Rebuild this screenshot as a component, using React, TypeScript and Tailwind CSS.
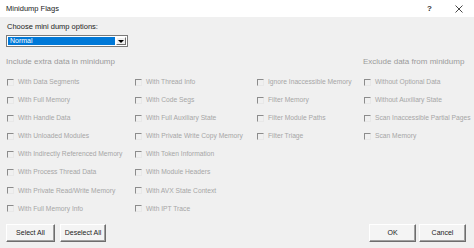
const includeCols: string[][] = [
  [
    'With Data Segments',
    'With Full Memory',
    'With Handle Data',
    'With Unloaded Modules',
    'With Indirectly Referenced Memory',
    'With Process Thread Data',
    'With Private Read/Write Memory',
    'With Full Memory Info',
  ],
  [
    'With Thread Info',
    'With Code Segs',
    'With Full Auxiliary State',
    'With Private Write Copy Memory',
    'With Token Information',
    'With Module Headers',
    'With AVX State Context',
    'With IPT Trace',
  ],
  ['Ignore Inaccessible Memory', 'Filter Memory', 'Filter Module Paths', 'Filter Triage'],
]

const excludeCol = ['Without Optional Data', 'Without Auxiliary State', 'Scan Inaccessible Partial Pages', 'Scan Memory']

function Check({ label }: { label: string }) {
  return (
    <div className="flex items-center h-[18.1px] whitespace-nowrap">
      <span className="w-[7px] h-[7px] border-t border-l border-t-[#8c8c8c] border-l-[#8c8c8c] border-r border-b border-r-[#e8e8e8] border-b-[#e8e8e8] bg-[#f0f0f0]" />
      <span className="ml-[4px] text-[6.7px] text-[#a6a6a6]">{label}</span>
    </div>
  )
}

function Button({ label, width }: { label: string; width: string }) {
  return (
    <button
      className={`${width} h-[18px] flex items-center justify-center text-[7px] text-[#222] bg-[#f4f4f4] border border-t-white border-l-white border-r-[#6e6e6e] border-b-[#6e6e6e] shadow-[inset_-1px_-1px_0_#a0a0a0]`}
    >
      {label}
    </button>
  )
}

export default function App() {
  return (
    <div
      className="w-[474px] h-[248px] bg-[#f0f0f0] flex flex-col overflow-hidden"
      style={{ fontFamily: '"Liberation Sans", Arial, sans-serif' }}
    >
      {/* title bar */}
      <div className="h-[17px] bg-white flex items-center justify-between pl-[6px] pr-[11px] shrink-0">
        <span className="text-[7.5px] text-[#222]">Minidump Flags</span>
        <div className="flex items-center gap-[23px] text-[#333]">
          <span className="text-[8px] font-bold">?</span>
          <svg width="8" height="8" viewBox="0 0 8 8" className="text-[#333]">
            <path d="M0.5 0.5 L7.5 7.5 M7.5 0.5 L0.5 7.5" stroke="currentColor" strokeWidth="0.9" />
          </svg>
        </div>
      </div>

      <div className="flex flex-col flex-1 px-[6px]">
        <div className="mt-[4px] text-[7.5px] text-[#222] h-[12px] flex items-center pl-[1px]">Choose mini dump options:</div>

        {/* combo */}
        <div className="mt-[2px] w-[122px] h-[12px] border border-[#7a7a7a] bg-white flex items-stretch">
          <div className="flex-1 m-[1px] bg-[#0078d7] text-white text-[7px] flex items-center pl-[2px]">Normal</div>
          <div className="w-[10px] my-[1px] mr-[1px] bg-[#f0f0f0] border border-t-white border-l-white border-r-[#6e6e6e] border-b-[#6e6e6e] flex items-center justify-center">
            <span className="w-0 h-0 border-l-[3px] border-r-[3px] border-t-[3px] border-l-transparent border-r-transparent border-t-black" />
          </div>
        </div>

        {/* section headers */}
        <div className="mt-[9px] h-[12px] flex items-center text-[8px] text-[#9b9b9b]">
          <span className="w-[357px]">Include extra data in minidump</span>
          <span>Exclude data from minidump</span>
        </div>

        <div className="mt-[5px] grid grid-cols-[128px_122px_107px_1fr] pl-[1px]">
          {includeCols.map((col, i) => (
            <div key={i} className="flex flex-col">
              {col.map((l) => (
                <Check key={l} label={l} />
              ))}
            </div>
          ))}
          <div className="flex flex-col">
            {excludeCol.map((l) => (
              <Check key={l} label={l} />
            ))}
          </div>
        </div>

        {/* buttons */}
        <div className="mt-auto mb-[6px] flex items-center">
          <Button label="Select All" width="w-[49px]" />
          <div className="ml-[5px]">
            <Button label="Deselect All" width="w-[46px]" />
          </div>
          <div className="ml-auto flex gap-[3px] mr-[2px]">
            <Button label="OK" width="w-[47px]" />
            <Button label="Cancel" width="w-[47px]" />
          </div>
        </div>
      </div>
    </div>
  )
}
